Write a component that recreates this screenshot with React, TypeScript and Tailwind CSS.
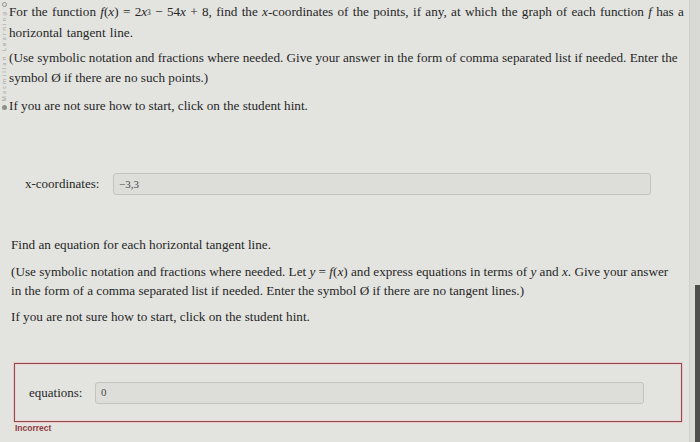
import React from 'react';

const serif = { fontFamily: '"Liberation Serif", "Times New Roman", serif' };

function Fx() {
  return (
    <>
      <i>f</i>(<i>x</i>)
    </>
  );
}

function AnswerInput({ value, className = '' }: { value: string; className?: string }) {
  return (
    <div
      className={`h-[22px] flex items-center px-[5px] rounded-[3px] border border-[#c3c4bf] bg-[#dddeda] text-[11px] text-[#4a4a4a] ${className}`}
    >
      {value}
    </div>
  );
}

export default function App() {
  return (
    <div
      className="w-[700px] h-[442px] overflow-hidden flex bg-[#e3e4e0] text-[#262626]"
      style={serif}
    >
      {/* left brand strip */}
      <div className="w-[8px] shrink-0 flex flex-col items-center pt-[2px] gap-[3px] text-[#a2a39f]">
        <span className="w-[5px] h-[5px] rounded-full border border-[#8d8e8a]" />
        <span
          className="text-[6px] leading-none tracking-[2px] font-sans"
          style={{ writingMode: 'vertical-rl', transform: 'rotate(180deg)' }}
        >
          Macmillan Learning
        </span>
        <span className="w-[5px] h-[5px] rounded-full bg-[#8d8e8a]" />
      </div>

      {/* content */}
      <div className="w-[681px] shrink-0 pt-[1px] pl-[1px] text-[13.2px] whitespace-nowrap overflow-hidden">
        <p className="leading-[21px] [word-spacing:1px]">
          For the function <Fx /> = 2<i>x</i>
          <sup className="text-[7.5px] leading-none relative -top-[1.5px]">3</sup> − 54<i>x</i> + 8, find the <i>x</i>-coordinates of the points, if any, at which the graph of each function <i>f</i> has a
          <br />
          horizontal tangent line.
        </p>
        <p className="leading-[20px] mt-[5px]">
          (Use symbolic notation and fractions where needed. Give your answer in the form of comma separated list if needed. Enter the
          <br />
          symbol Ø if there are no such points.)
        </p>
        <p className="leading-[21px] mt-[7px]">If you are not sure how to start, click on the student hint.</p>

        <div className="flex items-center mt-[57px] pl-[16px] pr-[38px]">
          <span className="w-[88px] text-[13px]">x-coordinates:</span>
          <AnswerInput value="−3,3" className="flex-1" />
        </div>

        <p className="leading-[21px] mt-[39px] pl-[2px]">Find an equation for each horizontal tangent line.</p>
        <p className="leading-[19px] mt-[7px] pl-[2px]">
          (Use symbolic notation and fractions where needed. Let <i>y</i> = <Fx /> and express equations in terms of <i>y</i> and <i>x</i>. Give your answer
          <br />
          in the form of a comma separated list if needed. Enter the symbol Ø if there are no tangent lines.)
        </p>
        <p className="leading-[21px] mt-[6px] pl-[2px]">If you are not sure how to start, click on the student hint.</p>

        <div className="mt-[36px] ml-[5px] mr-[7px] h-[59px] border-[1.5px] border-[#8c4a52] shadow-[0_0_0_1px_#ecc9c9,inset_0_0_0_1px_#efd3d3] flex items-center pl-[14px] pr-[37px]">
          <span className="w-[66px] text-[13px]">equations:</span>
          <AnswerInput value="0" className="flex-1" />
        </div>
        <div className="mt-[1px] ml-[6px] text-[8.5px] leading-[10px] font-bold text-[#8e3b3f]" style={{ fontFamily: '"Liberation Sans", Arial, sans-serif' }}>
          Incorrect
        </div>
      </div>

      {/* right scrollbar edge */}
      <div className="flex-1 flex flex-col border-l border-[#cfd0cc] bg-[#d9dad6]">
        <div className="h-[285px]" />
        <div className="flex-1 ml-[5px] bg-[#4d4e4c]" />
      </div>
    </div>
  );
}
